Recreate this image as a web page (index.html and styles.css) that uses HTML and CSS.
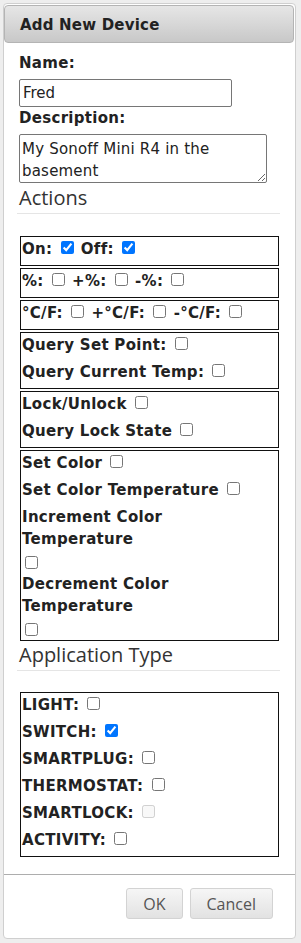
FILE: index.html
```html
<!DOCTYPE html>
<html>
<head>
<meta charset="utf-8">
<link rel="stylesheet" href="styles.css">
</head>
<body>
<div class="dialog">
  <div class="titlebar"><span class="title">Add New Device</span></div>
  <div class="content">
    <label class="field-label">Name:</label>
    <input class="text-input" type="text" value="Fred">
    <label class="field-label">Description:</label>
    <textarea class="desc">My Sonoff Mini R4 in the basement</textarea>

    <h3 class="section">Actions</h3>
    <div class="group"><label class="opt">On:</label> <input class="cb" type="checkbox" checked> <label class="opt">Off:</label> <input class="cb" type="checkbox" checked></div>
    <div class="group"><label class="opt">%:</label> <input class="cb" type="checkbox"> <label class="opt">+%:</label> <input class="cb" type="checkbox"> <label class="opt">-%:</label> <input class="cb" type="checkbox"></div>
    <div class="group"><label class="opt">°C/F:</label> <input class="cb" type="checkbox"> <label class="opt">+°C/F:</label> <input class="cb" type="checkbox"> <label class="opt">-°C/F:</label> <input class="cb" type="checkbox"></div>
    <div class="group"><label class="opt">Query Set Point:</label> <input class="cb" type="checkbox"><br><label class="opt">Query Current Temp:</label> <input class="cb" type="checkbox"></div>
    <div class="group"><label class="opt">Lock/Unlock</label> <input class="cb" type="checkbox"><br><label class="opt">Query Lock State</label> <input class="cb" type="checkbox"></div>
    <div class="group"><label class="opt">Set Color</label> <input class="cb" type="checkbox"><br><label class="opt">Set Color Temperature</label> <input class="cb" type="checkbox"><br><label class="opt">Increment Color<br>Temperature</label><br><input class="cb" type="checkbox"><br><label class="opt">Decrement Color<br>Temperature</label><br><input class="cb" type="checkbox"></div>

    <h3 class="section section-app">Application Type</h3>
    <div class="group"><label class="opt">LIGHT:</label> <input class="cb" type="checkbox"><br><label class="opt">SWITCH:</label> <input class="cb" type="checkbox" checked><br><label class="opt">SMARTPLUG:</label> <input class="cb" type="checkbox"><br><label class="opt">THERMOSTAT:</label> <input class="cb" type="checkbox"><br><label class="opt">SMARTLOCK:</label> <input class="cb" type="checkbox" disabled><br><label class="opt">ACTIVITY:</label> <input class="cb" type="checkbox"></div>
  </div>
  <div class="buttonpane">
    <button class="btn" type="button">OK</button>
    <button class="btn" type="button">Cancel</button>
  </div>
</div>
</body>
</html>
```
FILE: styles.css
```css
* { box-sizing: border-box; }

body {
  margin: 0;
  background: #eeeeee;
  font-family: "DejaVu Sans", Verdana, sans-serif;
  color: #222;
}

.dialog {
  width: 293px;
  margin: 3px 0 0 3px;
  background: #fff;
  border: 1px solid #cfcfcf;
  border-radius: 4px;
  padding: 1px 0 0;
}

.titlebar {
  height: 38px;
  margin-right: 1px;
  padding: 2px 0 0 15px;
  border: 1px solid #b4b4b4;
  border-radius: 4px;
  background: linear-gradient(#e6e6e6, #c8c8c8);
}

.title {
  font-weight: bold;
  font-size: 15px;
  letter-spacing: 0.2px;
  line-height: 34px;
  color: #222;
}

.content {
  padding: 9px 0 15px 15px;
}

.field-label {
  display: block;
  font-weight: bold;
  font-size: 15px;
  letter-spacing: 0.3px;
  line-height: 22px;
  margin-bottom: 5px;
}

.text-input {
  display: block;
  width: 213px;
  height: 28px;
  border: 1px solid #767676;
  border-radius: 2px;
  padding: 0 3px;
  font-family: "DejaVu Sans", Verdana, sans-serif;
  font-size: 15px;
  color: #222;
}

.desc {
  display: block;
  width: 248px;
  height: 49px;
  margin: 0;
  border: 1px solid #767676;
  border-radius: 2px;
  padding: 3px 2px;
  font-family: "DejaVu Sans", Verdana, sans-serif;
  font-size: 15px;
  letter-spacing: 0.2px;
  line-height: 22px;
  color: #222;
  overflow: hidden;
}

.section {
  width: 263px;
  margin: 3px 0 22px -2px;
  padding: 0 0 3px 2px;
  border-bottom: 1px solid #e5e5e5;
  font-family: "Open Sans", sans-serif;
  font-weight: normal;
  font-size: 20px;
  line-height: 24px;
  color: #333;
}

.section-app {
  margin-top: 2px;
  margin-bottom: 21px;
}

.group {
  width: 259px;
  margin: 0 0 2px 1px;
  padding: 1px 1px 0 1px;
  border: 1px solid #111;
  font-size: 15px;
  font-weight: bold;
  color: #222;
}

.opt {
  display: inline-block;
  letter-spacing: 0.3px;
  line-height: 22px;
  margin-bottom: 5px;
}

.cb {
  width: 13px;
  height: 13px;
  margin: 0 2px 0 3px;
  vertical-align: baseline;
}

.buttonpane {
  display: flex;
  justify-content: flex-end;
  gap: 7px;
  padding: 13px 22px 19px 0;
  border-top: 1px solid #adadad;
}

.btn {
  height: 31px;
  padding: 0 16px;
  border: 1px solid #d3d3d3;
  border-radius: 3px;
  background: linear-gradient(#f6f6f6, #e2e2e2);
  font-family: "Open Sans", sans-serif;
  font-size: 16px;
  color: #555;
}
```
